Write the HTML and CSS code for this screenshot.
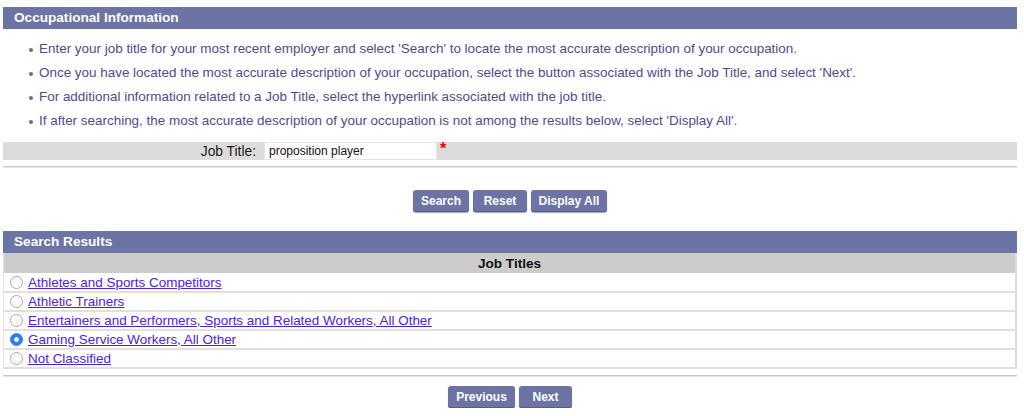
FILE: index.html
```html
<!DOCTYPE html>
<html>
<head>
<meta charset="utf-8">
<link rel="stylesheet" href="styles.css">
</head>
<body>
<div class="page">
  <div class="bar">Occupational Information</div>
  <ul class="instructions">
    <li>Enter your job title for your most recent employer and select 'Search' to locate the most accurate description of your occupation.</li>
    <li>Once you have located the most accurate description of your occupation, select the button associated with the Job Title, and select 'Next'.</li>
    <li>For additional information related to a Job Title, select the hyperlink associated with the job title.</li>
    <li>If after searching, the most accurate description of your occupation is not among the results below, select 'Display All'.</li>
  </ul>
  <div class="field-row">
    <label class="field-label" for="jt">Job Title:</label>
    <input class="field-input" id="jt" type="text" value="proposition player">
    <span class="req">*</span>
  </div>
  <div class="rule"></div>
  <div class="btn-row top-btns">
    <button class="btn btn-search">Search</button>
    <button class="btn btn-reset">Reset</button>
    <button class="btn btn-all">Display All</button>
  </div>
  <div class="bar">Search Results</div>
  <table class="results">
    <thead>
      <tr><th>Job Titles</th></tr>
    </thead>
    <tbody>
      <tr><td><span class="radio"></span><a href="#">Athletes and Sports Competitors</a></td></tr>
      <tr><td><span class="radio"></span><a href="#">Athletic Trainers</a></td></tr>
      <tr><td><span class="radio"></span><a href="#">Entertainers and Performers, Sports and Related Workers, All Other</a></td></tr>
      <tr><td><span class="radio checked"></span><a href="#">Gaming Service Workers, All Other</a></td></tr>
      <tr><td><span class="radio"></span><a href="#">Not Classified</a></td></tr>
    </tbody>
  </table>
  <div class="rule bottom-rule"></div>
  <div class="btn-row bottom-btns">
    <button class="btn btn-prev">Previous</button>
    <button class="btn btn-next">Next</button>
  </div>
</div>
</body>
</html>
```
FILE: styles.css
```css
* { box-sizing: border-box; }
html, body { margin: 0; padding: 0; background: #fff; }
body {
  font-family: "Liberation Sans", Arial, Helvetica, sans-serif;
  font-size: 13px;
  color: #222;
}
.page {
  padding: 7px 7px 0 3px;
}
.bar {
  height: 22px;
  background: #6c74a6;
  color: #fff;
  font-weight: bold;
  font-size: 13.6px;
  line-height: 22px;
  padding-left: 11px;
}
.instructions {
  margin: 8px 0 0 0;
  padding: 0 0 0 36px;
  color: #4c4c8c;
  list-style: none;
  font-size: 13.45px;
}
.instructions li {
  line-height: 24px;
  position: relative;
}
.instructions li::before {
  content: "";
  position: absolute;
  left: -10px;
  top: 11px;
  width: 4px;
  height: 4px;
  border-radius: 50%;
  background: #6a6a8a;
}
.field-row {
  margin-top: 9px;
  height: 18px;
  background: #dcdcdc;
  display: flex;
  align-items: center;
}
.field-label {
  width: 261px;
  text-align: right;
  padding-right: 8px;
  font-size: 13.8px;
  color: #1a1a1a;
}
.field-input {
  width: 173px;
  height: 18px;
  border: 1px solid #e4e4e4;
  background: #fff;
  font-family: "Liberation Sans", Arial, sans-serif;
  font-size: 12px;
  padding: 0 4px;
  margin: 0;
  color: #111;
}
.req {
  color: #e00;
  font-weight: bold;
  font-size: 16px;
  align-self: flex-start;
  line-height: 14px;
  margin-left: 3px;
}
.rule {
  margin-top: 6px;
  height: 2px;
  background: #c8c8c8;
  border-bottom: 1px solid #e6e6e6;
}
.btn-row {
  display: flex;
  justify-content: center;
  gap: 4px;
}
.top-btns {
  margin-top: 22px;
  margin-bottom: 19px;
}
.btn {
  height: 22px;
  padding: 0;
  border: none;
  border-radius: 3px;
  background: #6c74a6;
  box-shadow: inset 0 -1px 0 #555c8c, 0 1px 1px #a0a5c4;
  color: #fff;
  font-family: "Liberation Sans", Arial, sans-serif;
  font-weight: bold;
  font-size: 12px;
  cursor: pointer;
}
.btn-search { width: 56px; }
.btn-reset { width: 54px; }
.btn-all { width: 76px; }
.btn-prev { width: 67px; }
.btn-next { width: 53px; }
.results {
  width: 100%;
  border-collapse: collapse;
  border-right: 2px solid #dcdcdc;
  border-left: 1px solid #e4e4e4;
}
.results th {
  height: 20px;
  background: #cccccc;
  color: #111;
  font-size: 13.6px;
  font-weight: bold;
  text-align: center;
  padding: 0;
}
.results td {
  height: 19px;
  padding: 0 0 0 6px;
  border-bottom: 2px solid #e0e0e0;
  line-height: 17px;
  font-size: 13.45px;
}
.results a {
  color: #4a22e0;
  text-decoration: underline;
}
.radio {
  display: inline-block;
  width: 13px;
  height: 13px;
  border: 1px solid #a8a8a8;
  border-radius: 50%;
  background: #fff;
  vertical-align: -2px;
  margin-right: 5px;
}
.radio.checked {
  border-color: #2e7ef2;
  background: radial-gradient(circle, #fff 0 2px, #2e7ef2 2.6px);
}
.bottom-rule {
  margin-top: 6px;
}
.bottom-btns {
  margin-top: 9px;
}
```
